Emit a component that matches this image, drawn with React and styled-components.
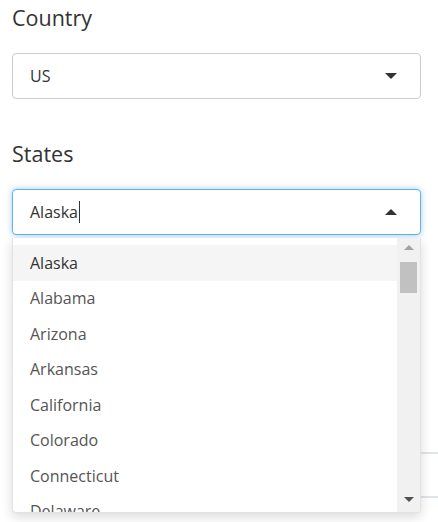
import React from 'react';
import styled, { createGlobalStyle } from 'styled-components';

const GlobalStyle = createGlobalStyle`
  body {
    margin: 0;
    background: #fff;
    font-family: "Open Sans", "Noto Sans", sans-serif;
    color: #333;
    overflow: hidden;
  }
`;

const Page = styled.div`
  padding: 0 17px 0 12px;
  width: 438px;
  height: 522px;
  box-sizing: border-box;
  overflow: hidden;
`;

const Field = styled.div`
  display: flex;
  flex-direction: column;
`;

const Label = styled.div`
  font-size: 21.5px;
  line-height: 28px;
  padding-top: 4px;
  margin-bottom: 21px;
  color: #333;
`;

const SelectBox = styled.div`
  position: relative;
  height: 46px;
  box-sizing: border-box;
  border: 1px solid ${({ focused }) => (focused ? '#66afe9' : '#ccc')};
  border-radius: 4px;
  box-shadow: ${({ focused }) => (focused ? '0 0 6px rgba(102,175,233,0.6)' : 'none')};
  display: flex;
  align-items: center;
  justify-content: space-between;
  padding: 0 23px 0 17px;
  font-size: 16px;
  color: #333;
  background: #fff;
`;

const Value = styled.span`
  display: flex;
  align-items: center;
`;

const Caret = styled.span`
  display: inline-block;
  width: 1px;
  height: 22px;
  background: #333;
  margin-left: 1px;
`;

const Spacer = styled.div`
  height: ${({ h }) => h}px;
`;

const Menu = styled.div`
  position: absolute;
  left: -1px;
  right: -1px;
  top: 48px;
  height: 274px;
  background: #fff;
  border: 1px solid #e2e2e2;
  border-top: none;
  border-radius: 0 0 4px 4px;
  box-shadow: 0 4px 12px rgba(0,0,0,0.15);
  display: flex;
  overflow: hidden;
  z-index: 2;
`;

const List = styled.div`
  flex: 1;
  padding-top: 7px;
  overflow: hidden;
`;

const Item = styled.div`
  height: 35.5px;
  display: flex;
  align-items: center;
  padding-left: 17px;
  font-size: 16px;
  color: ${({ active }) => (active ? '#333' : '#555')};
  background: ${({ active }) => (active ? '#f5f5f5' : 'transparent')};
`;

const Scrollbar = styled.div`
  width: 23px;
  background: #f1f1f1;
  display: flex;
  flex-direction: column;
  align-items: center;
  padding: 7px 0 10px;
  box-sizing: border-box;
`;

const Thumb = styled.div`
  width: 17px;
  height: 31px;
  background: #c1c1c1;
  margin-top: 12px;
`;

const Fill = styled.div`
  flex: 1;
`;

const Table = styled.div`
  margin-top: 217px;
  margin-right: -17px;
`;

const Row = styled.div`
  height: 42px;
  border-top: 2px solid #dfe3ea;
`;

const Arrow = ({ up, size = 12, color = '#333' }) => (
  <svg width={size} height={size / 2} viewBox="0 0 12 6">
    <path d={up ? 'M0 6 L6 0 L12 6 Z' : 'M0 0 L12 0 L6 6 Z'} fill={color} />
  </svg>
);

const states = ['Alaska', 'Alabama', 'Arizona', 'Arkansas', 'California', 'Colorado', 'Connecticut', 'Delaware'];

const App = () => (
  <Page>
    <GlobalStyle />
    <Field>
      <Label>Country</Label>
      <SelectBox>
        <Value>US</Value>
        <Arrow />
      </SelectBox>
    </Field>
    <Spacer h={37} />
    <Field>
      <Label>States</Label>
      <SelectBox focused>
        <Value>Alaska<Caret /></Value>
        <Arrow up />
        <Menu>
          <List>
            {states.map((s, i) => (
              <Item key={s} active={i === 0}>{s}</Item>
            ))}
          </List>
          <Scrollbar>
            <Arrow up size={10} color="#a3a3a3" />
            <Thumb />
            <Fill />
            <Arrow size={10} color="#505050" />
          </Scrollbar>
        </Menu>
      </SelectBox>
    </Field>
    <Table>
      <Row />
      <Row />
    </Table>
  </Page>
);

export default App;
